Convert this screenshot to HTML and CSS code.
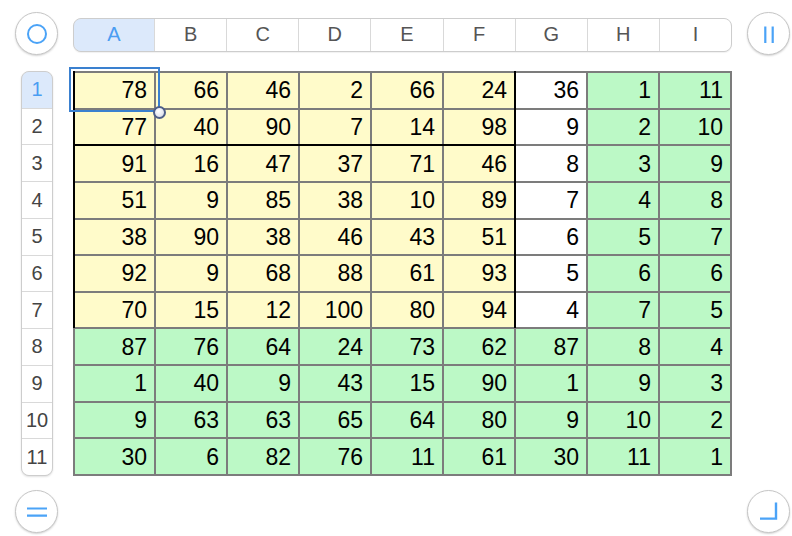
FILE: index.html
```html
<!DOCTYPE html>
<html>
<head>
<meta charset="utf-8">
<link rel="stylesheet" href="styles.css">
</head>
<body>
<div class="app">
  <div class="toprow">
    <div class="btn"><svg width="24" height="24" viewBox="0 0 24 24"><circle cx="12" cy="12" r="9" fill="none" stroke="#4ba3f7" stroke-width="2"/></svg></div>
    <div class="colhead">
      <div class="ch sel">A</div><div class="ch">B</div><div class="ch">C</div><div class="ch">D</div><div class="ch">E</div><div class="ch">F</div><div class="ch">G</div><div class="ch">H</div><div class="ch">I</div>
    </div>
    <div class="btn"><svg width="24" height="24" viewBox="0 0 24 24"><path d="M8.3 4.5V21M15.7 4.5V21" stroke="#4ba3f7" stroke-width="2.2" fill="none"/></svg></div>
  </div>
  <div class="midrow">
    <div class="rowhead">
      <div class="rh sel">1</div><div class="rh">2</div><div class="rh">3</div><div class="rh">4</div><div class="rh">5</div><div class="rh">6</div><div class="rh">7</div><div class="rh">8</div><div class="rh">9</div><div class="rh">10</div><div class="rh">11</div>
    </div>
    <div class="sheet">
      <div class="grid">
        <div class="c y">78</div><div class="c y">66</div><div class="c y">46</div><div class="c y">2</div><div class="c y">66</div><div class="c y">24</div><div class="c w">36</div><div class="c g">1</div><div class="c g">11</div>
        <div class="c y">77</div><div class="c y">40</div><div class="c y">90</div><div class="c y">7</div><div class="c y">14</div><div class="c y">98</div><div class="c w">9</div><div class="c g">2</div><div class="c g">10</div>
        <div class="c y">91</div><div class="c y">16</div><div class="c y">47</div><div class="c y">37</div><div class="c y">71</div><div class="c y">46</div><div class="c w">8</div><div class="c g">3</div><div class="c g">9</div>
        <div class="c y">51</div><div class="c y">9</div><div class="c y">85</div><div class="c y">38</div><div class="c y">10</div><div class="c y">89</div><div class="c w">7</div><div class="c g">4</div><div class="c g">8</div>
        <div class="c y">38</div><div class="c y">90</div><div class="c y">38</div><div class="c y">46</div><div class="c y">43</div><div class="c y">51</div><div class="c w">6</div><div class="c g">5</div><div class="c g">7</div>
        <div class="c y">92</div><div class="c y">9</div><div class="c y">68</div><div class="c y">88</div><div class="c y">61</div><div class="c y">93</div><div class="c w">5</div><div class="c g">6</div><div class="c g">6</div>
        <div class="c y">70</div><div class="c y">15</div><div class="c y">12</div><div class="c y">100</div><div class="c y">80</div><div class="c y">94</div><div class="c w">4</div><div class="c g">7</div><div class="c g">5</div>
        <div class="c g">87</div><div class="c g">76</div><div class="c g">64</div><div class="c g">24</div><div class="c g">73</div><div class="c g">62</div><div class="c g">87</div><div class="c g">8</div><div class="c g">4</div>
        <div class="c g">1</div><div class="c g">40</div><div class="c g">9</div><div class="c g">43</div><div class="c g">15</div><div class="c g">90</div><div class="c g">1</div><div class="c g">9</div><div class="c g">3</div>
        <div class="c g">9</div><div class="c g">63</div><div class="c g">63</div><div class="c g">65</div><div class="c g">64</div><div class="c g">80</div><div class="c g">9</div><div class="c g">10</div><div class="c g">2</div>
        <div class="c g">30</div><div class="c g">6</div><div class="c g">82</div><div class="c g">76</div><div class="c g">11</div><div class="c g">61</div><div class="c g">30</div><div class="c g">11</div><div class="c g">1</div>
      </div>
      <div class="outline"></div>
      <div class="hline"></div>
      <div class="selection"></div>
      <div class="handle"></div>
    </div>
  </div>
  <div class="botrow">
    <div class="btn"><svg width="24" height="24" viewBox="0 0 24 24"><path d="M2 8.5H22M2 15.7H22" stroke="#4ba3f7" stroke-width="2.2" fill="none"/></svg></div>
    <div class="btn"><svg width="24" height="24" viewBox="0 0 24 24"><path d="M3 18.6H19V2.5" stroke="#4ba3f7" stroke-width="2.4" fill="none"/></svg></div>
  </div>
</div>
</body>
</html>
```
FILE: styles.css
```css
html, body {
  margin: 0;
  padding: 0;
  background: #ffffff;
}
body {
  font-family: "Liberation Sans", Arial, sans-serif;
  width: 792px;
  height: 536px;
  overflow: hidden;
}
.app {
  display: flex;
  flex-direction: column;
}
.toprow {
  display: flex;
  align-items: center;
  padding: 12px 0 0 15px;
  gap: 15px;
}
.btn {
  width: 43px;
  height: 43px;
  box-sizing: border-box;
  border-radius: 50%;
  border: 1px solid #c6c6c6;
  box-shadow: 0 1px 2px rgba(0,0,0,0.18);
  background: #fff;
  display: flex;
  align-items: center;
  justify-content: center;
}
.colhead {
  width: 659px;
  height: 34px;
  box-sizing: border-box;
  margin-top: 2px;
  border: 1px solid #cdcdcd;
  border-radius: 8px;
  overflow: hidden;
  display: grid;
  grid-template-columns: 80px repeat(8, 1fr);
  gap: 1px;
  background: #d9d9d9;
  box-shadow: 0 1px 1px rgba(0,0,0,0.06);
}
.ch {
  background: #fff;
  display: flex;
  align-items: center;
  justify-content: center;
  font-size: 20px;
  color: #555;
}
.ch.sel {
  background: #dce9fb;
  color: #4a9df2;
}
.midrow {
  display: flex;
  padding: 16px 0 0 21px;
  gap: 20px;
}
.rowhead {
  width: 32px;
  height: 405px;
  box-sizing: border-box;
  border: 1px solid #cdcdcd;
  border-radius: 8px;
  overflow: hidden;
  display: grid;
  grid-template-rows: repeat(11, 1fr);
  gap: 1px;
  background: #d9d9d9;
  box-shadow: 0 1px 2px rgba(0,0,0,0.12);
}
.rh {
  background: #fff;
  display: flex;
  align-items: center;
  justify-content: center;
  font-size: 20px;
  color: #444;
}
.rh.sel {
  background: #dce9fb;
  color: #4a9df2;
}
.sheet {
  position: relative;
  width: 659px;
  height: 405px;
}
.grid {
  width: 659px;
  height: 405px;
  box-sizing: border-box;
  padding: 2px;
  background: #7c7c7c;
  display: grid;
  grid-template-columns: 79px repeat(8, 70px);
  grid-template-rows: repeat(11, 1fr);
  gap: 2px;
}
.c {
  display: flex;
  align-items: center;
  justify-content: flex-end;
  padding-right: 7px;
  padding-top: 1px;
  font-size: 23px;
  color: #000;
}
.y { background: #fffbca; }
.w { background: #ffffff; }
.g { background: #bcf9c6; }
.outline {
  position: absolute;
  left: 0;
  top: 0;
  width: 443px;
  height: 257px;
  box-sizing: border-box;
  border-left: 2px solid #000;
  border-right: 2px solid #000;
}
.hline {
  position: absolute;
  left: 0;
  top: 73px;
  width: 443px;
  height: 2px;
  background: #000;
}
.selection {
  position: absolute;
  left: -4px;
  top: -4px;
  width: 91px;
  height: 45px;
  box-sizing: border-box;
  border: 2px solid #3a80cf;
}
.handle {
  position: absolute;
  left: 80px;
  top: 35px;
  width: 13px;
  height: 13px;
  box-sizing: border-box;
  border-radius: 50%;
  border: 2px solid #4d5e88;
  background: radial-gradient(circle at 40% 35%, #ffffff 0%, #e4e7f0 60%, #c3c8d8 100%);
}
.botrow {
  display: flex;
  justify-content: space-between;
  padding: 14px 2px 0 15px;
}
```
